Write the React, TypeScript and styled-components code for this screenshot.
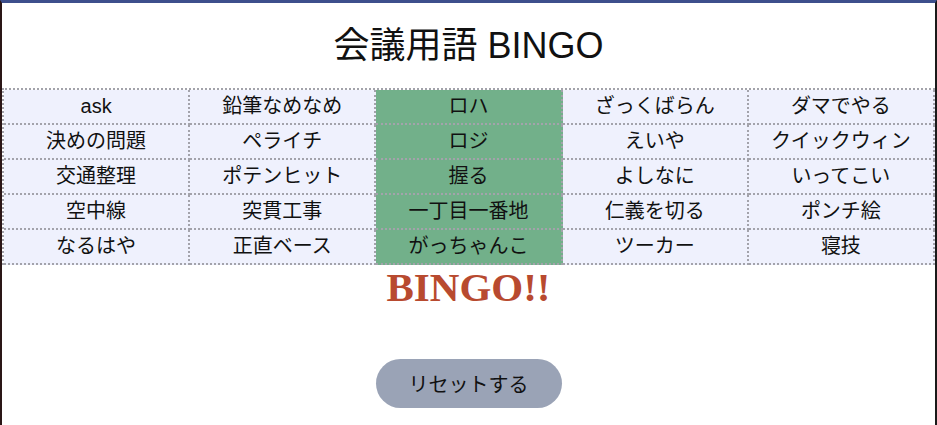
import React, { useState } from 'react';
import styled, { createGlobalStyle } from 'styled-components';

const GlobalStyle = createGlobalStyle`
  html, body {
    margin: 0;
    padding: 0;
    background: #ffffff;
  }
  body {
    font-family: "Liberation Sans", "Noto Sans CJK JP", sans-serif;
    color: #111;
  }
`;

const Frame = styled.div`
  box-sizing: border-box;
  width: 937px;
  height: 425px;
  border-top: 3px solid #3d4f8c;
  border-left: 2px solid #2a1616;
  border-right: 2px solid #1a1a1a;
  overflow: hidden;
`;

const Title = styled.h1`
  margin: 0;
  padding: 24px 0 0;
  height: 61px;
  text-align: center;
  font-size: 36px;
  font-weight: normal;
  line-height: 38px;
`;

const Board = styled.table`
  width: 100%;
  border-collapse: separate;
  border-spacing: 0;
  table-layout: fixed;
  border-top: 2px dotted #a3a3ab;
  border-left: 2px dotted #a3a3ab;
`;

const Cell = styled.td<{ $hit: boolean }>`
  height: 33px;
  padding: 0;
  border-right: 2px dotted #a3a3ab;
  border-bottom: 2px dotted #a3a3ab;
  background: ${(p) => (p.$hit ? '#72b08a' : '#eff1fd')};
  text-align: center;
  font-size: 20px;
  line-height: 33px;
  cursor: pointer;
  white-space: nowrap;
`;

const Result = styled.div`
  height: 44px;
  text-align: center;
  font-family: "Liberation Serif", serif;
  font-weight: bold;
  font-size: 41px;
  line-height: 44px;
  color: #b84a2f;
`;

const Footer = styled.div`
  display: flex;
  justify-content: center;
  padding-top: 50px;
`;

const ResetButton = styled.button`
  width: 186px;
  height: 49px;
  border: none;
  border-radius: 25px;
  background: #9aa3b6;
  color: #111;
  font-family: "Liberation Sans", "Noto Sans CJK JP", sans-serif;
  font-size: 20px;
  cursor: pointer;
`;

const words = [
  ['ask', '鉛筆なめなめ', 'ロハ', 'ざっくばらん', 'ダマでやる'],
  ['決めの問題', 'ペライチ', 'ロジ', 'えいや', 'クイックウィン'],
  ['交通整理', 'ポテンヒット', '握る', 'よしなに', 'いってこい'],
  ['空中線', '突貫工事', '一丁目一番地', '仁義を切る', 'ポンチ絵'],
  ['なるはや', '正直ベース', 'がっちゃんこ', 'ツーカー', '寝技'],
];

const initial = words.map((row) => row.map((_, c) => c === 2));

const hasBingo = (marks: boolean[][]) => {
  const n = marks.length;
  for (let i = 0; i < n; i++) {
    if (marks[i].every(Boolean)) return true;
    if (marks.every((row) => row[i])) return true;
  }
  if (marks.every((row, i) => row[i])) return true;
  if (marks.every((row, i) => row[n - 1 - i])) return true;
  return false;
};

const App: React.FC = () => {
  const [marks, setMarks] = useState<boolean[][]>(initial);

  const toggle = (r: number, c: number) => {
    setMarks((prev) => prev.map((row, i) => row.map((v, j) => (i === r && j === c ? !v : v))));
  };

  const reset = () => setMarks(words.map((row) => row.map(() => false)));

  return (
    <Frame>
      <GlobalStyle />
      <Title>会議用語 BINGO</Title>
      <Board>
        <tbody>
          {words.map((row, r) => (
            <tr key={r}>
              {row.map((word, c) => (
                <Cell key={word} $hit={marks[r][c]} onClick={() => toggle(r, c)}>
                  {word}
                </Cell>
              ))}
            </tr>
          ))}
        </tbody>
      </Board>
      <Result>{hasBingo(marks) ? 'BINGO!!' : ''}</Result>
      <Footer>
        <ResetButton onClick={reset}>リセットする</ResetButton>
      </Footer>
    </Frame>
  );
};

export default App;
